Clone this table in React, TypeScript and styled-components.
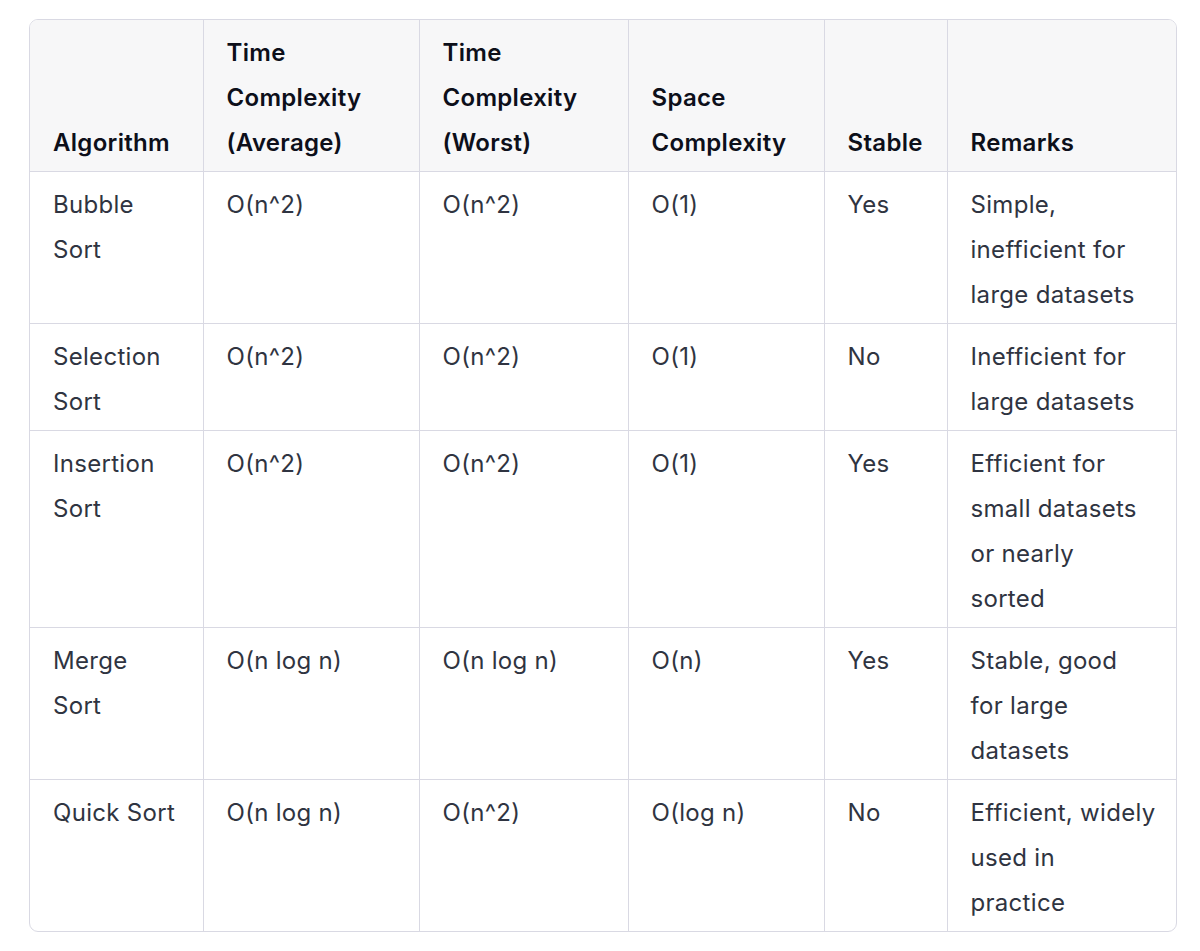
import React from "react";
import styled, { createGlobalStyle } from "styled-components";

const Global = createGlobalStyle`
  html, body { margin: 0; padding: 0; background: #ffffff; }
  body { font-family: Inter, "Noto Sans", "Liberation Sans", sans-serif; }
`;

const Page = styled.div`
  padding: 19px 0 0 29px;
`;

const Frame = styled.div`
  width: 1148px;
  border: 1px solid #d9d9e3;
  border-radius: 9px;
  overflow: hidden;
  box-sizing: border-box;
`;

const Table = styled.table`
  width: 100%;
  border-collapse: collapse;
  table-layout: fixed;
  font-size: 24px;
  line-height: 45px;
  letter-spacing: 0.3px;
`;

const HeadCell = styled.th`
  background: #f7f7f8;
  color: #0d0f1a;
  font-weight: 600;
  text-align: left;
  vertical-align: bottom;
  padding: 10px 12px 6px 23px;
  border-left: 1px solid #d9d9e3;
  border-bottom: 1px solid #d9d9e3;
  &:first-child { border-left: none; padding-left: 23px; }
`;

const Cell = styled.td`
  color: #2f3441;
  font-weight: 400;
  vertical-align: top;
  padding: 10px 12px 6px 23px;
  border-left: 1px solid #d9d9e3;
  border-top: 1px solid #d9d9e3;
  &:first-child { border-left: none; }
`;

const Line = styled.span`
  display: block;
  white-space: nowrap;
`;

const Row = styled.tr`
  &:first-child td { border-top: none; }
`;

const widths = [173, 216, 209, 196, 123, 230];
const headers: string[][] = [
  ["Algorithm"],
  ["Time", "Complexity", "(Average)"],
  ["Time", "Complexity", "(Worst)"],
  ["Space", "Complexity"],
  ["Stable"],
  ["Remarks"],
];
const rows: string[][][] = [
  [["Bubble", "Sort"], ["O(n^2)"], ["O(n^2)"], ["O(1)"], ["Yes"], ["Simple,", "inefficient for", "large datasets"]],
  [["Selection", "Sort"], ["O(n^2)"], ["O(n^2)"], ["O(1)"], ["No"], ["Inefficient for", "large datasets"]],
  [["Insertion", "Sort"], ["O(n^2)"], ["O(n^2)"], ["O(1)"], ["Yes"], ["Efficient for", "small datasets", "or nearly", "sorted"]],
  [["Merge", "Sort"], ["O(n log n)"], ["O(n log n)"], ["O(n)"], ["Yes"], ["Stable, good", "for large", "datasets"]],
  [["Quick Sort"], ["O(n log n)"], ["O(n^2)"], ["O(log n)"], ["No"], ["Efficient, widely", "used in", "practice"]],
];

export default function App() {
  return (
    <>
      <Global />
      <Page>
        <Frame>
          <Table>
            <colgroup>
              {widths.map((w, i) => (
                <col key={i} style={{ width: w }} />
              ))}
            </colgroup>
            <thead>
              <tr>
                {headers.map((h, i) => (
                  <HeadCell key={i}>
                    {h.map((l, j) => (
                      <Line key={j}>{l}</Line>
                    ))}
                  </HeadCell>
                ))}
              </tr>
            </thead>
            <tbody>
              {rows.map((r, ri) => (
                <Row key={ri}>
                  {r.map((c, i) => (
                    <Cell key={i}>
                      {c.map((l, j) => (
                        <Line key={j}>{l}</Line>
                      ))}
                    </Cell>
                  ))}
                </Row>
              ))}
            </tbody>
          </Table>
        </Frame>
      </Page>
    </>
  );
}
